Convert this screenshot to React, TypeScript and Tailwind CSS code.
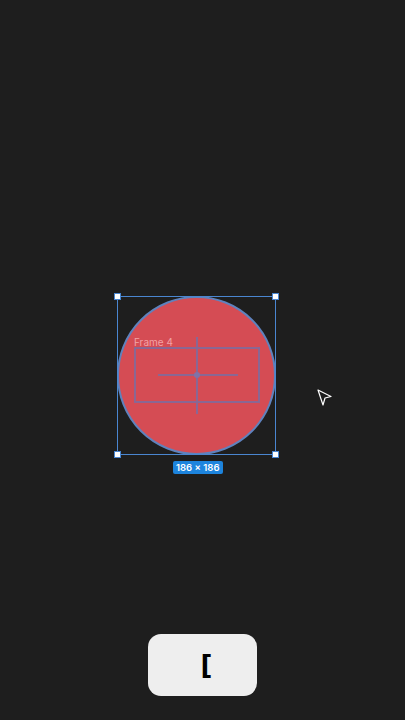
export default function App() {
  return (
    <div className="relative flex h-[720px] w-full flex-col items-center justify-end bg-[#1e1e1e] pb-[24px] font-['Inter',sans-serif]">
      {/* canvas: selected circle frame */}
      <div className="absolute left-[117px] top-[296px] h-[159px] w-[159px]">
        <div className="absolute inset-0 rounded-full border-2 border-[#5f82bd] bg-[#d54c54]" />
        {/* inner frame */}
        <div className="absolute left-[17px] top-[51px] h-[56px] w-[126px] border-2 border-[#8a6793]" />
        <span className="absolute left-[17px] top-[41px] text-[10px] leading-none text-[#f2a3a6]">Frame 4</span>
        {/* crosshair */}
        <div className="absolute left-[79px] top-[41px] h-[77px] w-[2px] bg-[#8a6793]" />
        <div className="absolute left-[41px] top-[78px] h-[2px] w-[80px] bg-[#8a6793]" />
        <div className="absolute left-[77px] top-[76px] h-[6px] w-[6px] rounded-full bg-[#7f73a8]" />
        {/* selection box */}
        <div className="absolute inset-0 border border-[#4a86d0]" />
        <div className="absolute -left-[3px] -top-[3px] h-[7px] w-[7px] border border-[#4a86d0] bg-white" />
        <div className="absolute -right-[3px] -top-[3px] h-[7px] w-[7px] border border-[#4a86d0] bg-white" />
        <div className="absolute -bottom-[3px] -left-[3px] h-[7px] w-[7px] border border-[#4a86d0] bg-white" />
        <div className="absolute -bottom-[3px] -right-[3px] h-[7px] w-[7px] border border-[#4a86d0] bg-white" />
        <div className="absolute left-[56px] top-[165px] rounded-[2px] bg-[#1d84dd] px-[3px] py-[1px] text-[9.5px] font-semibold leading-[11px] text-white">
          186 × 186
        </div>
      </div>

      {/* cursor */}
      <svg className="absolute left-[316px] top-[388px]" width="18" height="20" viewBox="0 0 18 20">
        <path
          d="M2 2 L15 8.5 L9 10 L7 17 Z"
          fill="#1e1e1e"
          stroke="#ffffff"
          strokeWidth="1.2"
          strokeLinejoin="round"
        />
      </svg>

      {/* key button */}
      <div className="flex h-[62px] w-[109px] items-center justify-center rounded-[13px] bg-[#eeeeee]">
        <span className="pl-[8px] font-['DejaVu_Sans',sans-serif] text-[26px] font-bold leading-none text-black">[</span>
      </div>
    </div>
  );
}
